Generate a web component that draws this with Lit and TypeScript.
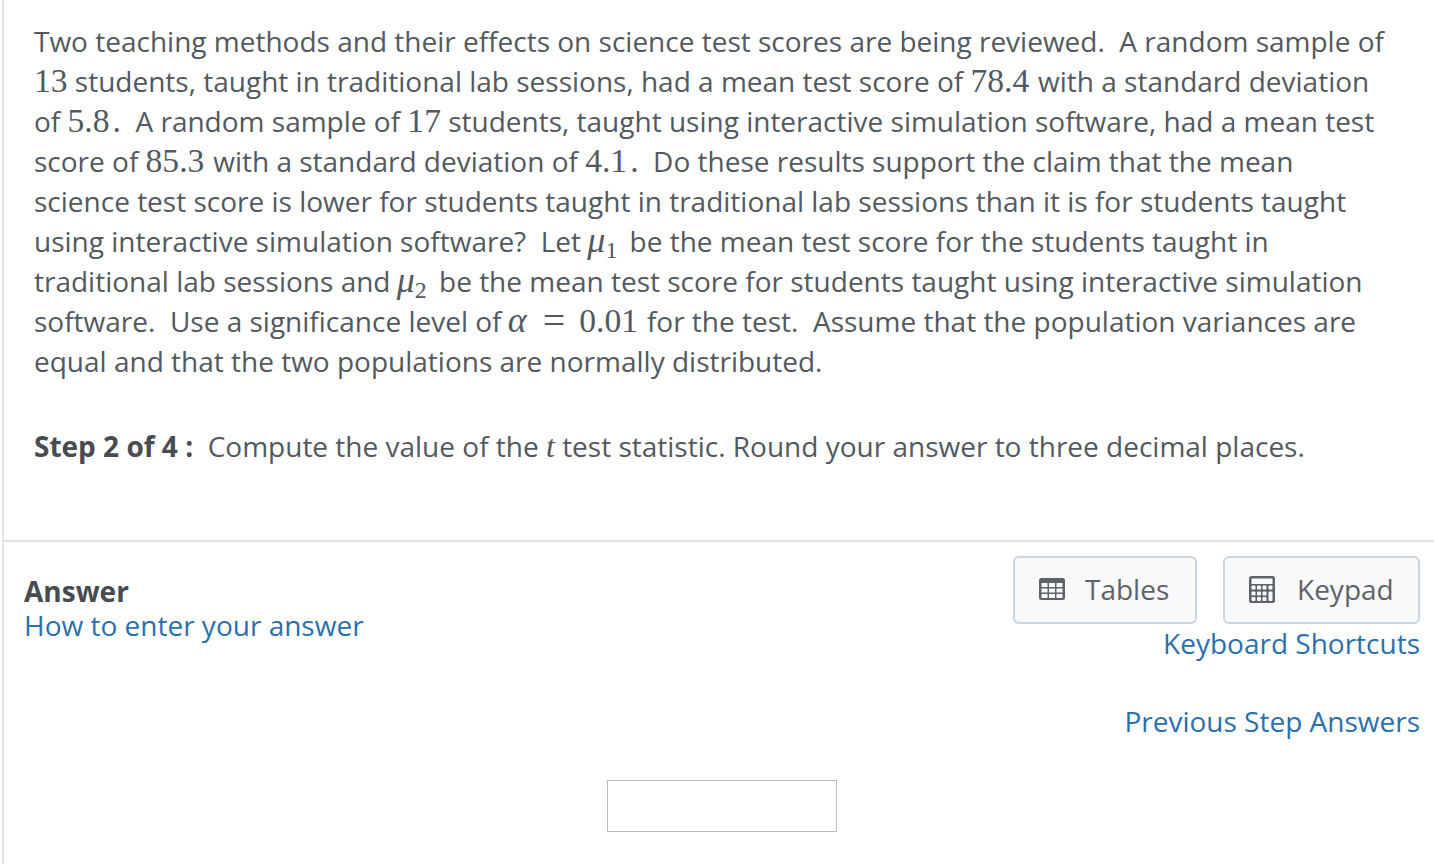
import { LitElement, html, css } from "lit";
import { customElement } from "lit/decorators.js";

@customElement("app-root")
export class AppRoot extends LitElement {
  static styles = css`
    :host { display: block; height: 864px; overflow: hidden; background: #fff; font-family: "Open Sans", sans-serif; color: #53595e; }
    * { box-sizing: border-box; }
    .question { margin-left: 2px; border-left: 2px solid #e3e3e3; height: 864px; display: flex; flex-direction: column; }
    .top { height: 542px; padding: 21px 0 0 30px; border-bottom: 2px solid #e0e0e0; font-size: 28px; }
    .para { line-height: 40px; white-space: nowrap; }
    .m, .i { font-family: "Liberation Serif", serif; font-size: 33.6px; line-height: 0; }
    .i { font-style: italic; }
    .d { margin-right: 1.600px; }
    .dot { margin-left: 1.400px; font-family: "Liberation Serif", serif; font-size: 33.6px; line-height: 0; }
    .mu { font-size: 36px; margin-left: -1px; }
    .alpha { font-size: 36px; margin-left: -1px; }
    .eq { font-size: 40px; margin: 0 14px 0 16px; vertical-align: -2px; }
    sub { font-family: "Liberation Serif", serif; font-size: 24px; line-height: 0; vertical-align: -6px; margin-right: -2.400px; }
    .step { margin-top: 45px; line-height: 40px; white-space: nowrap; }
    .step .i { font-size: 32px; }
    b { font-weight: 700; color: #484c50; }
    .answer { display: flex; justify-content: space-between; padding: 14px 14px 0 20px; }
    .left { padding-top: 18px; font-size: 28px; line-height: 34px; }
    .left b { display: block; }
    a { color: #2c6fad; text-decoration: none; }
    .right { display: flex; flex-direction: column; align-items: flex-end; font-size: 28px; }
    .btns { display: flex; gap: 26px; }
    .btn { height: 68px; display: flex; align-items: center; border: 2px solid #c8d6e0; border-radius: 6px; background: #f8f9fb; color: #5f6368; font-size: 28px; padding-bottom: 2px; }
    .tables { width: 184px; padding-left: 24px; gap: 20px; }
    .keypad { width: 197px; padding-left: 24px; gap: 22px; }
    .btn svg { flex: none; display: block; }
    .kb { line-height: 40px; margin-top: -1px; }
    .prev { line-height: 40px; margin-top: 38px; }
    .box { align-self: center; width: 230px; height: 52px; border: 1px solid #bbb; margin: 39px 0 0 6px; background: #fff; }
  `;

  render() {
    return html`<div class="question">
      <div class="top">
        <div class="para">
          Two teaching methods and their effects on science test scores are being reviewed.&nbsp; A random sample of<br />
          <span class="m">13</span> students, taught in traditional lab sessions, had a mean test score of <span class="m d">78.4</span> with a standard deviation<br />
          of <span class="m d">5.8</span><span class="dot">.</span>&nbsp; A random sample of <span class="m">17</span> students, taught using interactive simulation software, had a mean test<br />
          score of <span class="m d">85.3</span> with a standard deviation of <span class="m d">4.1</span><span class="dot">.</span>&nbsp; Do these results support the claim that the mean<br />
          science test score is lower for students taught in traditional lab sessions than it is for students taught<br />
          using interactive simulation software?&nbsp; Let <span class="i mu">μ</span><sub>1</sub>&nbsp; be the mean test score for the students taught in<br />
          traditional lab sessions and <span class="i mu">μ</span><sub>2</sub>&nbsp; be the mean test score for students taught using interactive simulation<br />
          software.&nbsp; Use a significance level of <span class="i alpha">α</span><span class="m eq">=</span><span class="m d">0.01</span> for the test.&nbsp; Assume that the population variances are<br />
          equal and that the two populations are normally distributed.
        </div>
        <div class="step"><b>Step 2 of 4&nbsp;:</b>&nbsp; Compute the value of the <span class="i">t</span> test statistic. Round your answer to three decimal places.</div>
      </div>
      <div class="answer">
        <div class="left"><b>Answer</b><a href="#">How to enter your answer</a></div>
        <div class="right">
          <div class="btns">
            <div class="btn tables">
              <svg width="26" height="22" viewBox="0 0 26 22" fill="#f8f9fb"><rect width="26" height="22" rx="2.500" fill="#5f6368"/><rect x="2.500" y="5" width="6" height="4"/><rect x="10" y="5" width="6" height="4"/><rect x="17.500" y="5" width="6" height="4"/><rect x="2.500" y="10.500" width="6" height="4"/><rect x="10" y="10.500" width="6" height="4"/><rect x="17.500" y="10.500" width="6" height="4"/><rect x="2.500" y="16" width="6" height="4"/><rect x="10" y="16" width="6" height="4"/><rect x="17.500" y="16" width="6" height="4"/></svg>
              <span>Tables</span>
            </div>
            <div class="btn keypad">
              <svg width="26" height="27" viewBox="0 0 26 27" fill="#f8f9fb"><rect width="26" height="27" rx="2.500" fill="#5f6368"/><rect x="2.500" y="2.500" width="21" height="5.500"/><rect x="2.500" y="9.500" width="4" height="4" rx="1"/><rect x="8" y="9.500" width="4" height="4" rx="1"/><rect x="13.500" y="9.500" width="4" height="4" rx="1"/><rect x="19.500" y="9.500" width="4" height="4" rx="1"/><rect x="2.500" y="15.500" width="4" height="4" rx="1"/><rect x="8" y="15.500" width="4" height="4" rx="1"/><rect x="13.500" y="15.500" width="4" height="4" rx="1"/><rect x="19.500" y="15.500" width="4" height="9.500" rx="1"/><rect x="2.500" y="21" width="4" height="4" rx="1"/><rect x="8" y="21" width="4" height="4" rx="1"/><rect x="13.500" y="21" width="4" height="4" rx="1"/></svg>
              <span>Keypad</span>
            </div>
          </div>
          <a class="kb" href="#">Keyboard Shortcuts</a>
          <a class="prev" href="#">Previous Step Answers</a>
        </div>
      </div>
      <div class="box"></div>
    </div>`;
  }
}
